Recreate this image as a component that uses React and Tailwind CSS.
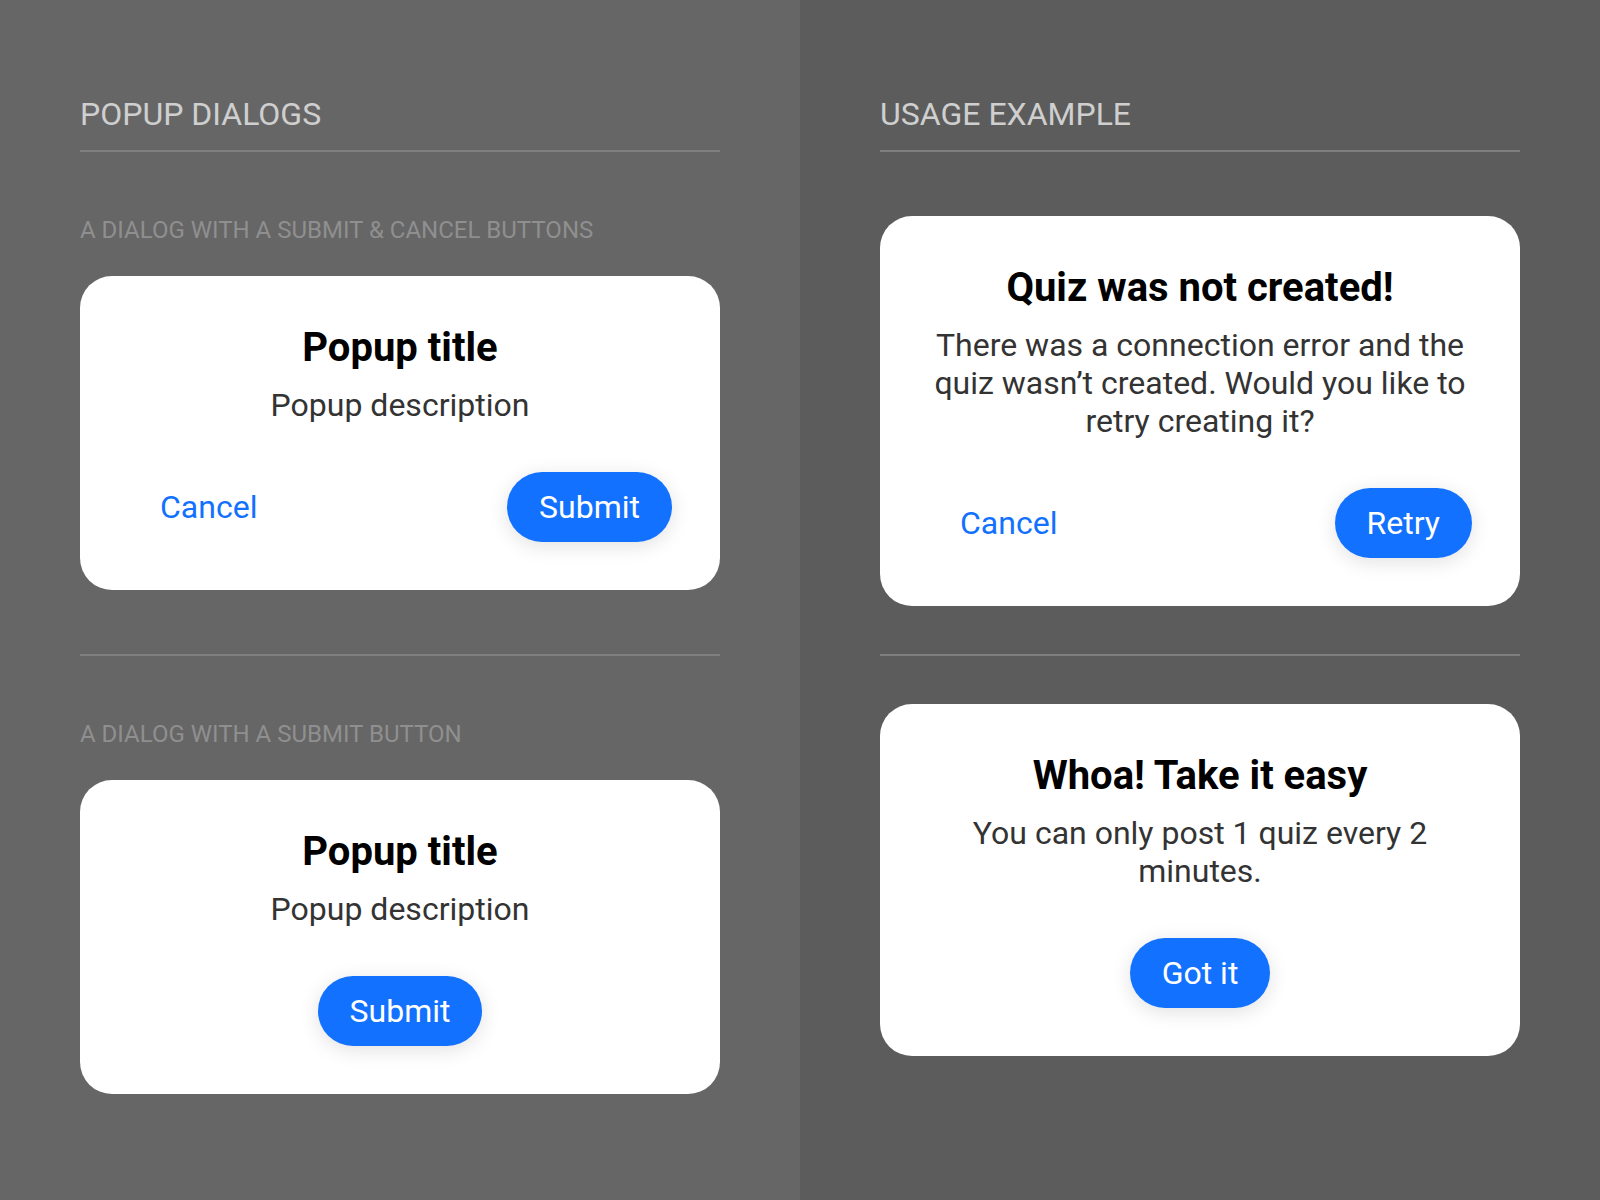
import React from 'react';

const font = { fontFamily: 'Roboto, "Noto Sans", sans-serif' };

const DialogCard = ({ title, description, cancelLabel, submitLabel }) => {
  return (
    <div className="bg-white rounded-[32px] p-12 flex flex-col items-center text-center">
      <h2 className="text-[40px] leading-[48px] font-bold text-black">{title}</h2>
      <p className="mt-[14px] text-[32px] leading-[38px] text-[#333333]">{description}</p>
      <div className={`mt-12 w-full flex items-center ${cancelLabel ? 'justify-between' : 'justify-center'}`}>
        {cancelLabel && (
          <button type="button" className="px-8 py-4 text-[32px] leading-[38px] text-[#1271ff]">
            {cancelLabel}
          </button>
        )}
        <button
          type="button"
          className="px-8 py-4 rounded-full bg-[#1271ff] text-white text-[32px] leading-[38px] shadow-[0_4px_20px_rgba(0,0,0,0.12)]"
        >
          {submitLabel}
        </button>
      </div>
    </div>
  );
};

const SectionHeader = ({ children }) => (
  <div className="pb-[18px] border-b-2 border-[#7f7f7f]">
    <h1 className="text-[32px] leading-[36px] font-normal text-[#cfcfcf] uppercase">{children}</h1>
  </div>
);

const SectionLabel = ({ children }) => (
  <div className="text-[24px] leading-[26px] text-[#8f8f8f] uppercase">{children}</div>
);

const App = () => {
  return (
    <div className="min-h-[1200px] w-[1600px] grid grid-cols-2" style={font}>
      {/* Left column: component specs */}
      <div className="bg-[#666666] px-20 pt-24">
        <SectionHeader>Popup dialogs</SectionHeader>

        <div className="mt-[65px]">
          <SectionLabel>A dialog with a submit &amp; cancel buttons</SectionLabel>
        </div>
        <div className="mt-[33px]">
          <DialogCard
            title="Popup title"
            description="Popup description"
            cancelLabel="Cancel"
            submitLabel="Submit"
          />
        </div>

        <div className="mt-16 border-b-2 border-[#7f7f7f]" />

        <div className="mt-[65px]">
          <SectionLabel>A dialog with a submit button</SectionLabel>
        </div>
        <div className="mt-[33px]">
          <DialogCard title="Popup title" description="Popup description" submitLabel="Submit" />
        </div>
      </div>

      {/* Right column: real usage */}
      <div className="bg-[#5c5c5c] px-20 pt-24">
        <SectionHeader>Usage example</SectionHeader>

        <div className="mt-16">
          <DialogCard
            title="Quiz was not created!"
            description="There was a connection error and the quiz wasn’t created. Would you like to retry creating it?"
            cancelLabel="Cancel"
            submitLabel="Retry"
          />
        </div>

        <div className="mt-12 border-b-2 border-[#7f7f7f]" />

        <div className="mt-12">
          <DialogCard
            title="Whoa! Take it easy"
            description="You can only post 1 quiz every 2 minutes."
            submitLabel="Got it"
          />
        </div>
      </div>
    </div>
  );
};

export default App;
